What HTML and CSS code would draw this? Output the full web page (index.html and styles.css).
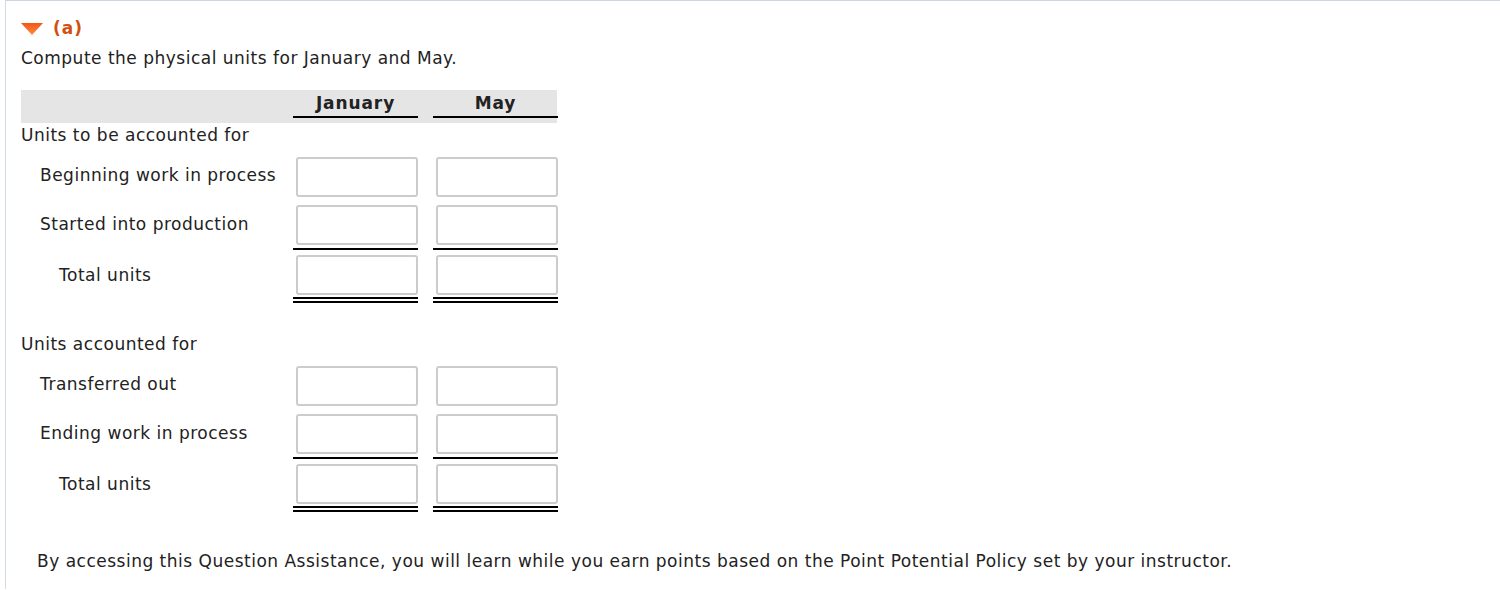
FILE: index.html
```html
<!DOCTYPE html>
<html>
<head>
<meta charset="utf-8">
<link rel="stylesheet" href="styles.css">
</head>
<body>
<div class="panel">
  <div class="part-head">
    <svg class="caret" width="22" height="12" viewBox="0 0 22 12">
      <defs>
        <linearGradient id="g" x1="0" y1="0" x2="0" y2="1">
          <stop offset="0" stop-color="#f0571a"/>
          <stop offset="1" stop-color="#ff8c3c"/>
        </linearGradient>
      </defs>
      <polygon points="0,0 22,0 11,12" fill="url(#g)"/>
    </svg>
    <span class="part-label">(a)</span>
  </div>
  <p class="prompt">Compute the physical units for January and May.</p>

  <div class="sheet">
    <div class="head-band">
      <div class="label-col"></div>
      <div class="head-cell">January</div>
      <div class="head-cell">May</div>
    </div>

    <div class="section">Units to be accounted for</div>
    <div class="row first">
      <div class="label-col indent1">Beginning work in process</div>
      <div class="cell"><input class="box" type="text"></div>
      <div class="cell"><input class="box" type="text"></div>
    </div>
    <div class="row">
      <div class="label-col indent1">Started into production</div>
      <div class="cell single"><input class="box" type="text"></div>
      <div class="cell single"><input class="box" type="text"></div>
    </div>
    <div class="row after-line">
      <div class="label-col indent2">Total units</div>
      <div class="cell double"><input class="box" type="text"></div>
      <div class="cell double"><input class="box" type="text"></div>
    </div>

    <div class="section second">Units accounted for</div>
    <div class="row first">
      <div class="label-col indent1">Transferred out</div>
      <div class="cell"><input class="box" type="text"></div>
      <div class="cell"><input class="box" type="text"></div>
    </div>
    <div class="row">
      <div class="label-col indent1">Ending work in process</div>
      <div class="cell single"><input class="box" type="text"></div>
      <div class="cell single"><input class="box" type="text"></div>
    </div>
    <div class="row after-line">
      <div class="label-col indent2">Total units</div>
      <div class="cell double"><input class="box" type="text"></div>
      <div class="cell double"><input class="box" type="text"></div>
    </div>
  </div>

  <p class="note">By accessing this Question Assistance, you will learn while you earn points based on the Point Potential Policy set by your instructor.</p>
</div>
</body>
</html>
```

FILE: styles.css
```css
html, body {
  margin: 0;
  padding: 0;
  background: #ffffff;
}
body {
  font-family: "DejaVu Sans", Verdana, sans-serif;
  font-size: 17px;
  letter-spacing: 0.5px;
  color: #222222;
}
.panel {
  margin-left: 5px;
  border-left: 1px solid #d3dbe6;
  border-top: 1px solid #ccd5e0;
  padding: 0 15px 0 15px;
  height: 589px;
  box-sizing: border-box;
}
.part-head {
  display: flex;
  align-items: center;
  height: 20px;
  margin-top: 17px;
}
.caret {
  display: block;
  margin-top: 1px;
}
.part-label {
  margin-left: 10px;
  font-weight: bold;
  color: #d14f10;
  line-height: 20px;
  letter-spacing: 1px;
}
.prompt {
  margin: 8px 0 0 0;
  line-height: 24px;
}
.sheet {
  margin-top: 20px;
  width: 536px;
}
.head-band {
  display: flex;
  background: #e5e5e5;
  height: 33px;
}
.label-col {
  width: 272px;
  flex: none;
  box-sizing: border-box;
  white-space: nowrap;
}
.head-cell {
  width: 125px;
  flex: none;
  margin-top: 3px;
  height: 23px;
  line-height: 20px;
  border-bottom: 2px solid #000;
  text-align: center;
  font-weight: bold;
  letter-spacing: 0.9px;
}
.head-cell + .head-cell {
  margin-left: 15px;
}
.section {
  line-height: 24px;
  height: 30px;
}
.section.second {
  margin-top: 29px;
  height: 30px;
}
.row {
  display: flex;
  align-items: stretch;
}
.row .label-col {
  display: flex;
  align-items: center;
  line-height: 24px;
  padding-bottom: 4px;
}
.indent1 { padding-left: 19px; }
.indent2 { padding-left: 38px; }
.cell {
  width: 125px;
  flex: none;
  box-sizing: border-box;
  padding: 4px 0 4px 3px;
}
.cell + .cell {
  margin-left: 15px;
}
.cell.single {
  padding-bottom: 3px;
  border-bottom: 2px solid #000;
}
.row.after-line .cell {
  padding-top: 5px;
}
.cell.double {
  padding-bottom: 2px;
  border-bottom: 6px double #000;
}
.box {
  display: block;
  width: 122px;
  height: 40px;
  box-sizing: border-box;
  border: 2px solid #cccccc;
  border-radius: 3px;
  margin: 0;
  padding: 0 6px;
  background: #fff;
  font-family: inherit;
  font-size: 16px;
}
.note {
  margin: 37px 0 0 16px;
  line-height: 24px;
}
```
